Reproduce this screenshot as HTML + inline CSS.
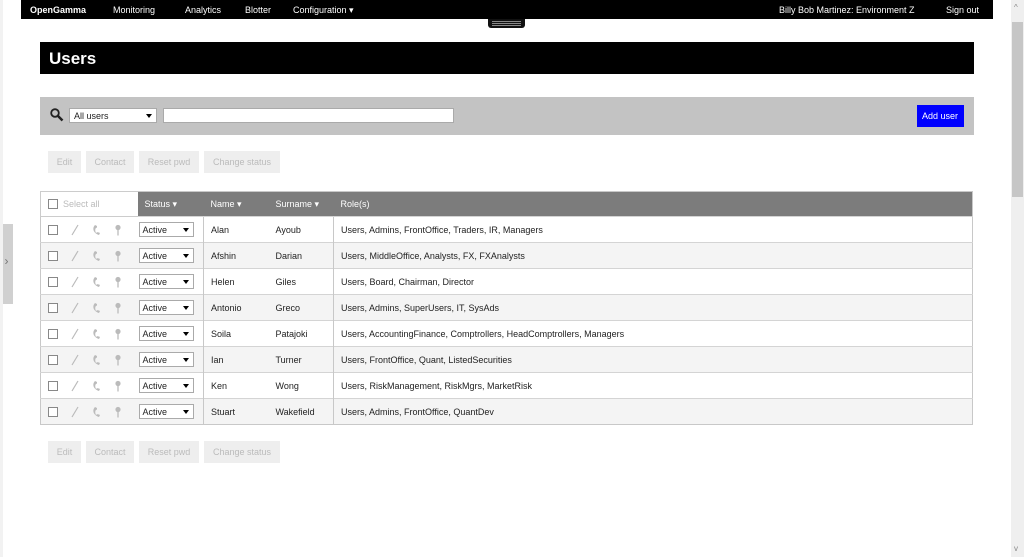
<!DOCTYPE html>
<html><head><meta charset="utf-8"><style>
*{box-sizing:border-box;margin:0;padding:0}
body{width:1024px;height:557px;overflow:hidden;background:#fff;font-family:"Liberation Sans",sans-serif;font-size:9px;color:#222;position:relative}
.abs{position:absolute}
#top{left:21px;top:0;width:972px;height:19px;background:#000;color:#fff}
#top span{position:absolute;top:5px;font-size:9px}
#handle{left:488px;top:19px;width:37px;height:9px;background:#111;border-radius:0 0 3px 3px}
#handle i{position:absolute;left:4px;right:4px;height:1px;background:#888}
#title{left:40px;top:42px;width:934px;height:32px;background:#000;color:#fff;font-size:17px;font-weight:bold;padding:7px 9px}
#bar{left:40px;top:97px;width:934px;height:38px;background:#c3c3c3}
.sel{background:#fff;border:1px solid #aaa;height:15px;font-size:9px;padding:2px 4px;position:absolute}
.tri{position:absolute;right:4px;top:5px;width:0;height:0;border-left:3px solid transparent;border-right:3px solid transparent;border-top:4px solid #000}
#add{left:917px;top:105px;width:47px;height:22px;background:#00f;color:#fff;padding:6px 5px;font-size:9px}
.btn{position:absolute;height:22px;background:#eee;color:#bbb;padding:6px 0;text-align:center;font-size:9px}
table{position:absolute;left:40px;top:191px;width:933px;border-collapse:collapse;border:1px solid #c8c8c8}
td{height:26px;border-top:1px solid #d4d4d4;padding:0 7px;white-space:nowrap;font-size:9px}
tr.h td{height:25px;background:#7c7c7c;color:#fff;border:none}
tr.h td.w{background:#fff;color:#bbb;border:1px solid #ccc;border-right:none}
tbody#b tr:nth-child(even) td{background:#f4f4f4}
.bl{border-left:1px solid #c8c8c8}
.cb{display:inline-block;width:10px;height:10px;border:1px solid #888;background:#fff;vertical-align:middle}
.ic{display:inline-block;vertical-align:middle;margin-left:13px}
.st{display:inline-block;position:relative;width:55px;height:15px;border:1px solid #aaa;background:#fff;padding:2px 3px;vertical-align:middle}
#sb{left:1011px;top:0;width:13px;height:557px;background:#efefef}
</style></head><body>
<div id="top" class="abs">
<span style="left:9px;font-weight:bold">OpenGamma</span>
<span style="left:92px">Monitoring</span>
<span style="left:164px">Analytics</span>
<span style="left:224px">Blotter</span>
<span style="left:272px">Configuration ▾</span>
<span style="left:758px">Billy Bob Martinez: Environment Z</span>
<span style="left:925px">Sign out</span>
</div>
<div id="handle" class="abs"><i style="top:2px"></i><i style="top:4px"></i><i style="top:6px"></i></div>
<div class="abs" style="left:0;top:224px;width:13px;height:80px;background:#d0d0d0;color:#777;font-size:12px;padding-top:30px;text-align:center">›</div>
<div class="abs" style="left:0;top:0;width:3px;height:557px;background:#f2f2f2"></div>
<div id="title" class="abs">Users</div>
<div id="bar" class="abs">
<svg class="abs" style="left:10px;top:11px" width="14" height="14" viewBox="0 0 14 14"><circle cx="5" cy="5" r="3.8" fill="none" stroke="#222" stroke-width="1.8"/><path d="M8 8l4.5 4.5" stroke="#222" stroke-width="2.5"/></svg>
<div class="sel" style="left:29px;top:11px;width:88px">All users<span class="tri"></span></div>
<div class="sel" style="left:123px;top:11px;width:291px"></div>
</div>
<div id="add" class="abs">Add user</div>
<div class="btn" style="left:48px;top:151px;width:33px">Edit</div>
<div class="btn" style="left:86px;top:151px;width:48px">Contact</div>
<div class="btn" style="left:139px;top:151px;width:60px">Reset pwd</div>
<div class="btn" style="left:204px;top:151px;width:76px">Change status</div>
<table>
<tr class="h"><td class="w" style="width:97px"><span class="cb"></span>&nbsp; Select all</td><td style="width:66px">Status ▾</td><td class="bl" style="width:65px">Name ▾</td><td style="width:65px">Surname ▾</td><td class="bl">Role(s)</td></tr>
<tbody id="b"></tbody>
</table>
<div class="btn" style="left:48px;top:441px;width:33px">Edit</div>
<div class="btn" style="left:86px;top:441px;width:48px">Contact</div>
<div class="btn" style="left:139px;top:441px;width:60px">Reset pwd</div>
<div class="btn" style="left:204px;top:441px;width:76px">Change status</div>
<div id="sb" class="abs"><div class="abs" style="left:1px;top:22px;width:11px;height:175px;background:#c6c6c6"></div><div class="abs" style="left:3px;top:3px;color:#888;font-size:8px">^</div><div class="abs" style="left:3px;top:544px;color:#888;font-size:8px">v</div></div>
<script>
var d=[["Alan","Ayoub","Users, Admins, FrontOffice, Traders, IR, Managers"],["Afshin","Darian","Users, MiddleOffice, Analysts, FX, FXAnalysts"],["Helen","Giles","Users, Board, Chairman, Director"],["Antonio","Greco","Users, Admins, SuperUsers, IT, SysAds"],["Soila","Patajoki","Users, AccountingFinance, Comptrollers, HeadComptrollers, Managers"],["Ian","Turner","Users, FrontOffice, Quant, ListedSecurities"],["Ken","Wong","Users, RiskManagement, RiskMgrs, MarketRisk"],["Stuart","Wakefield","Users, Admins, FrontOffice, QuantDev"]];
var ic='<svg class="ic" width="8" height="12"><path d="M1 11L7 1" stroke="#bbb" stroke-width="1.2"/></svg><svg class="ic" width="9" height="12"><path d="M3 1C0 4 1 9 7 11L8 9C6 8 5 8 4 9 3 7 3 5 4 4 5 4 5 3 5 2Z" fill="#bbb"/></svg><svg class="ic" width="8" height="12"><circle cx="4" cy="3.5" r="2.6" fill="#bbb"/><path d="M4 6V11.5" stroke="#bbb" stroke-width="1.3"/></svg>';
var h='';d.forEach(function(r){h+='<tr><td><span class="cb"></span>'+ic+'</td><td style="padding-left:1px"><span class="st">Active<span class="tri"></span></span></td><td class="bl">'+r[0]+'</td><td>'+r[1]+'</td><td class="bl">'+r[2]+'</td></tr>'});
document.getElementById('b').innerHTML=h;
</script>
</body></html>
